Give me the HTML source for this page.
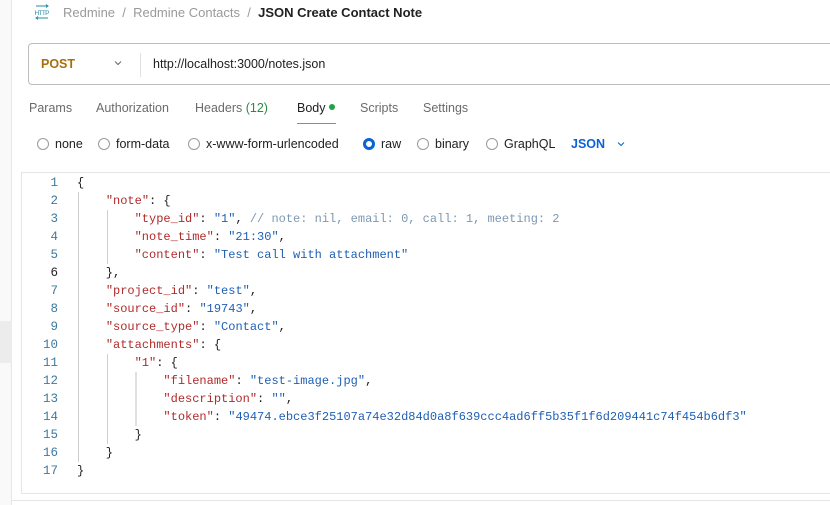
<!DOCTYPE html>
<html><head><meta charset="utf-8"><style>
*{margin:0;padding:0;box-sizing:border-box}
body{width:830px;height:505px;overflow:hidden;background:#fff;font-family:"Liberation Sans",sans-serif;position:relative;color:#212121}
.side{position:absolute;left:0;top:0;width:12px;height:505px;background:#f9f9f9;border-right:1px solid #e6e6e6}
.sideblk{position:absolute;left:0;top:321px;width:12px;height:42px;background:#ececec}
.bc{position:absolute;top:5px;left:34px;font-size:13px;white-space:nowrap}
.bc .g{color:#9a9a9a}
.bc b{color:#212121;font-weight:bold}
.url{position:absolute;left:28px;top:43px;width:810px;height:42px;border:1px solid #bdbdbd;border-radius:4px}
.method{position:absolute;left:12px;top:13px;font-size:12.5px;font-weight:bold;color:#a86e0a}
.chev{position:absolute;left:84px;top:14px}
.sep{position:absolute;left:111px;top:9px;width:1px;height:24px;background:#e0e0e0}
.u{position:absolute;left:124px;top:13px;font-size:12.5px;color:#212121}
.tabs{position:absolute;top:101px;left:29px;font-size:12.5px;color:#6b6b6b}
.tabs span{position:absolute;white-space:nowrap}
.rad{position:absolute;top:137px;font-size:12.5px;color:#212121;white-space:nowrap}
.rad i{display:inline-block;width:12px;height:12px;border:1px solid #9a9a9a;border-radius:50%;vertical-align:-2px;margin-right:6px}
.rad i.on{border:3.5px solid #0a62d9}
.ed{position:absolute;left:21px;top:172px;width:820px;height:322px;border:1px solid #e6e6e6}
.bot{position:absolute;left:12px;top:500px;width:818px;height:1px;background:#e6e6e6}
.ln{position:absolute;left:22px;width:36px;text-align:right;font-family:"Liberation Mono",monospace;font-size:12.5px;color:#3d7aa0}
.code{position:absolute;left:77px;font-family:"Liberation Mono",monospace;font-size:12px;white-space:pre;color:#212121}
.k{color:#b22a2a}.s{color:#1f5fb4}.c{color:#7d98b4}
.vl{position:absolute;width:1px;background:#cfcfcf}
</style></head><body>
<div class="side"></div><div class="sideblk"></div>
<svg style="position:absolute;left:33px;top:4px" width="18" height="16" viewBox="0 0 18 16"><path d="M3 2H15M13 0.5L15 2L13 3.5" stroke="#2a8da0" fill="none" stroke-width="1"/><text x="1.5" y="11" font-size="6.5" font-family="Liberation Sans" fill="#2a8da0" textLength="15">HTTP</text><path d="M3 14H15M5 12.5L3 14L5 15.5" stroke="#2a8da0" fill="none" stroke-width="1"/></svg>
<div class="bc"><span class="g" style="margin-left:29px">Redmine&nbsp; / &nbsp;Redmine Contacts&nbsp; / &nbsp;</span><b>JSON Create Contact Note</b></div>
<div class="url"><span class="method">POST</span>
<svg class="chev" width="10" height="10" viewBox="0 0 10 10"><path d="M2 3.5L5 6.5L8 3.5" stroke="#666" fill="none" stroke-width="1"/></svg>
<div class="sep"></div><span class="u">http://localhost:3000/notes.json</span></div>
<div class="tabs">
<span style="left:0">Params</span><span style="left:67px">Authorization</span>
<span style="left:166px">Headers <span style="position:static;color:#2a8a3c">(12)</span></span>
<span style="left:268px;color:#212121">Body <span style="position:static;display:inline-block;width:6px;height:6px;border-radius:50%;background:#1ea446;vertical-align:2px"></span></span>
<span style="left:268px;top:22px;width:39px;height:1px;background:#f06a3c"></span>
<span style="left:331px">Scripts</span><span style="left:394px">Settings</span>
</div>
<div class="rad" style="left:37px"><i></i>none</div>
<div class="rad" style="left:98px"><i></i>form-data</div>
<div class="rad" style="left:188px"><i></i>x-www-form-urlencoded</div>
<div class="rad" style="left:363px"><i class="on"></i>raw</div>
<div class="rad" style="left:417px"><i></i>binary</div>
<div class="rad" style="left:486px"><i></i>GraphQL</div>
<div class="rad" style="left:571px;color:#0a62d9;font-weight:bold">JSON</div>
<svg style="position:absolute;left:616px;top:139px" width="10" height="10" viewBox="0 0 10 10"><path d="M2 3.5L5 6.5L8 3.5" stroke="#0a62d9" fill="none" stroke-width="1"/></svg>
<div class="ed"></div><div class="bot"></div>
<div class="vl" style="left:78px;top:192px;height:270px"></div>
<div class="vl" style="left:107px;top:210px;height:54px"></div>
<div class="vl" style="left:107px;top:354px;height:90px"></div>
<div class="vl" style="left:135px;top:372px;height:54px;background:#e0e0e0;width:2px"></div>
<div class="ln" style="top:174px;line-height:18px">1<br>2<br>3<br>4<br>5<br><span style="color:#212121">6</span><br>7<br>8<br>9<br>10<br>11<br>12<br>13<br>14<br>15<br>16<br>17</div>
<div class="code" style="top:174px;line-height:18px">{
    <span class="k">"note"</span>: {
        <span class="k">"type_id"</span>: <span class="s">"1"</span>, <span class="c">// note: nil, email: 0, call: 1, meeting: 2</span>
        <span class="k">"note_time"</span>: <span class="s">"21:30"</span>,
        <span class="k">"content"</span>: <span class="s">"Test call with attachment"</span>
    },
    <span class="k">"project_id"</span>: <span class="s">"test"</span>,
    <span class="k">"source_id"</span>: <span class="s">"19743"</span>,
    <span class="k">"source_type"</span>: <span class="s">"Contact"</span>,
    <span class="k">"attachments"</span>: {
        <span class="k">"1"</span>: {
            <span class="k">"filename"</span>: <span class="s">"test-image.jpg"</span>,
            <span class="k">"description"</span>: <span class="s">""</span>,
            <span class="k">"token"</span>: <span class="s">"49474.ebce3f25107a74e32d84d0a8f639ccc4ad6ff5b35f1f6d209441c74f454b6df3"</span>
        }
    }
}</div>
</body></html>
